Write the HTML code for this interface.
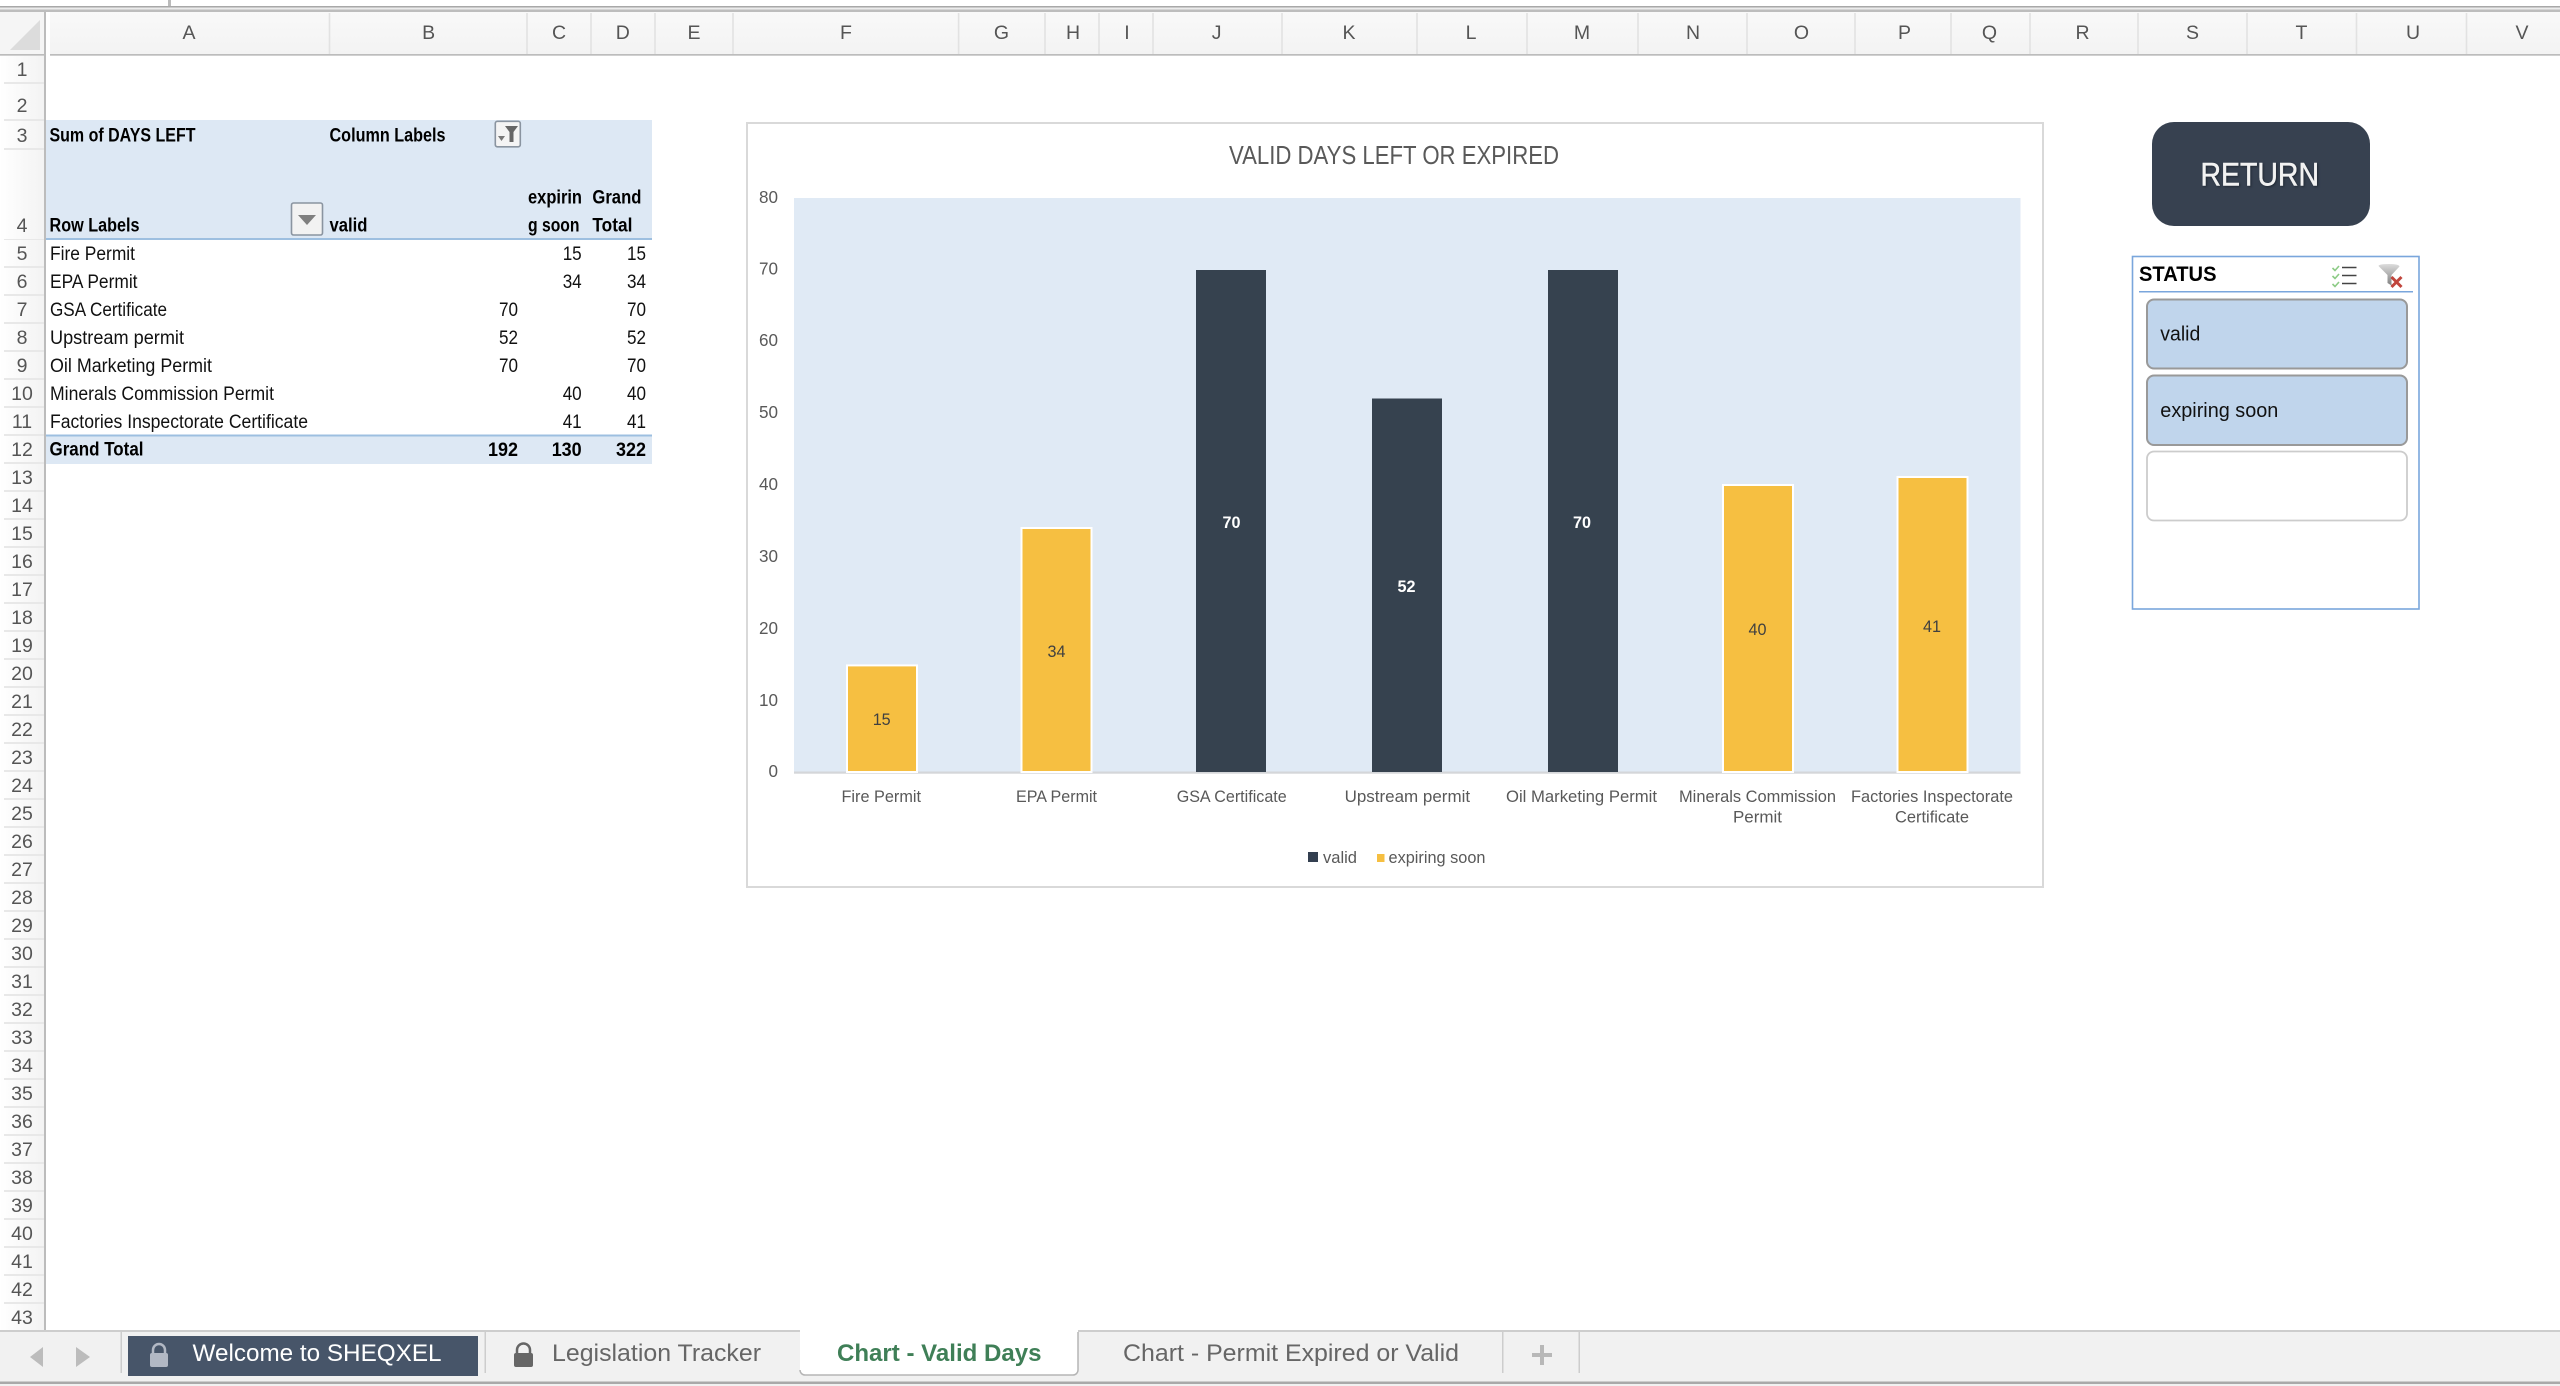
<!DOCTYPE html>
<html lang="en"><head><meta charset="utf-8"><title>Chart - Valid Days</title>
<style>
html,body{margin:0;padding:0;background:#fff;overflow:hidden}
svg{display:block}
text{font-family:"Liberation Sans",Arial,sans-serif}
.h{font-size:19.5px;fill:#555;text-anchor:middle}
.c{font-size:19.5px;fill:#555;text-anchor:middle}
.t{font-size:19px;fill:#111}
.b{font-size:19px;fill:#000;font-weight:bold}
.n{font-size:19px;fill:#111;text-anchor:end}
.nb{font-size:19px;fill:#000;font-weight:bold;text-anchor:end}
.y{font-size:17.5px;fill:#595959;text-anchor:end}
.x{font-size:16.5px;fill:#595959}
.dl{font-size:16.5px;fill:#404040;text-anchor:middle}
.dw{font-size:16.5px;fill:#fff;font-weight:bold;text-anchor:middle}
.tab{font-size:24px}
</style></head>
<body>
<svg width="2560" height="1386" viewBox="0 0 2560 1386" xmlns="http://www.w3.org/2000/svg">
<defs>
<linearGradient id="rh" x1="0" x2="1" y1="0" y2="0"><stop offset="0" stop-color="#fff"/><stop offset="1" stop-color="#f3f3f3"/></linearGradient>
<linearGradient id="ch" x1="0" x2="0" y1="0" y2="1"><stop offset="0" stop-color="#f9f9f9"/><stop offset="1" stop-color="#f3f3f3"/></linearGradient>
<linearGradient id="fg" x1="0" x2="0" y1="0" y2="1"><stop offset="0" stop-color="#dcdcdc"/><stop offset="1" stop-color="#808080"/></linearGradient>
<pattern id="rs" x="0" y="267" width="44" height="28" patternUnits="userSpaceOnUse"><rect x="4" y="-1" width="40" height="2" fill="#e8e8e8"/><rect x="4" y="27" width="40" height="2" fill="#e8e8e8"/></pattern>
</defs>
<rect width="2560" height="1386" fill="#fff"/>

<!-- top strip -->
<rect x="168" y="0" width="3" height="6" fill="#bbb"/>
<rect x="0" y="6" width="2560" height="1.5" fill="#a8a8a8"/>
<rect x="0" y="7.5" width="2560" height="2" fill="#ececec"/>
<rect x="0" y="9.5" width="2560" height="2.5" fill="#bdbdbd"/>

<!-- column header -->
<rect x="50" y="12" width="2510" height="42" fill="url(#ch)"/>
<rect x="50" y="54" width="2510" height="1.7" fill="#bcbcbc"/>
<rect x="0" y="12" width="44" height="42" fill="#f5f5f5"/>
<polygon points="10,50 40,20 40,50" fill="#dcdcdc"/>
<rect x="0" y="54" width="46" height="1.7" fill="#bcbcbc"/>
<rect x="44" y="12" width="2" height="1318" fill="#bcbcbc"/>
<path d="M329.5 13V54M527 13V54M591 13V54M655 13V54M733 13V54M958.6 13V54M1045 13V54M1099 13V54M1153 13V54M1282 13V54M1417 13V54M1527 13V54M1638 13V54M1747 13V54M1855 13V54M1951 13V54M2030 13V54M2138 13V54M2247 13V54M2356.5 13V54M2466.5 13V54" stroke="#e2e2e2" stroke-width="1.6" fill="none"/>
<text class="c" x="189" y="39">A</text><text class="c" x="428.6" y="39">B</text><text class="c" x="559" y="39">C</text><text class="c" x="622.8" y="39">D</text><text class="c" x="694" y="39">E</text><text class="c" x="846" y="39">F</text><text class="c" x="1001.500" y="39">G</text><text class="c" x="1073" y="39">H</text><text class="c" x="1127" y="39">I</text><text class="c" x="1216.6" y="39">J</text><text class="c" x="1349" y="39">K</text><text class="c" x="1471" y="39">L</text><text class="c" x="1582" y="39">M</text><text class="c" x="1693" y="39">N</text><text class="c" x="1801.500" y="39">O</text><text class="c" x="1904.500" y="39">P</text><text class="c" x="1989.500" y="39">Q</text><text class="c" x="2082.500" y="39">R</text><text class="c" x="2192.500" y="39">S</text><text class="c" x="2301.5" y="39">T</text><text class="c" x="2413" y="39">U</text><text class="c" x="2522" y="39">V</text>

<!-- row header -->
<rect x="0" y="56" width="44" height="1274" fill="url(#rh)"/>
<rect x="0" y="239" width="44" height="1091" fill="url(#rs)"/>
<path d="M4 83H44M4 120H44M4 149H44" stroke="#e8e8e8" stroke-width="2"/>
<text class="h" x="22" y="76">1</text><text class="h" x="22" y="112">2</text><text class="h" x="22" y="142">3</text><text class="h" x="22" y="232">4</text><text class="h" x="22" y="260">5</text><text class="h" x="22" y="288">6</text><text class="h" x="22" y="316">7</text><text class="h" x="22" y="344">8</text><text class="h" x="22" y="372">9</text><text class="h" x="22" y="400">10</text><text class="h" x="22" y="428">11</text><text class="h" x="22" y="456">12</text><text class="h" x="22" y="484">13</text><text class="h" x="22" y="512">14</text><text class="h" x="22" y="540">15</text><text class="h" x="22" y="568">16</text><text class="h" x="22" y="596">17</text><text class="h" x="22" y="624">18</text><text class="h" x="22" y="652">19</text><text class="h" x="22" y="680">20</text><text class="h" x="22" y="708">21</text><text class="h" x="22" y="736">22</text><text class="h" x="22" y="764">23</text><text class="h" x="22" y="792">24</text><text class="h" x="22" y="820">25</text><text class="h" x="22" y="848">26</text><text class="h" x="22" y="876">27</text><text class="h" x="22" y="904">28</text><text class="h" x="22" y="932">29</text><text class="h" x="22" y="960">30</text><text class="h" x="22" y="988">31</text><text class="h" x="22" y="1016">32</text><text class="h" x="22" y="1044">33</text><text class="h" x="22" y="1072">34</text><text class="h" x="22" y="1100">35</text><text class="h" x="22" y="1128">36</text><text class="h" x="22" y="1156">37</text><text class="h" x="22" y="1184">38</text><text class="h" x="22" y="1212">39</text><text class="h" x="22" y="1240">40</text><text class="h" x="22" y="1268">41</text><text class="h" x="22" y="1296">42</text><text class="h" x="22" y="1324">43</text>

<!-- pivot table -->
<rect x="46" y="120" width="606" height="119" fill="#dde8f4"/>
<rect x="46" y="238" width="606" height="2" fill="#9dbfe0"/>
<rect x="46" y="435" width="606" height="29" fill="#dde8f4"/>
<rect x="46" y="434.5" width="606" height="2" fill="#9dbfe0"/>
<text class="b" x="49.5" y="141.500" textLength="146" lengthAdjust="spacingAndGlyphs">Sum of DAYS LEFT</text>
<text class="b" x="329.5" y="141.500" textLength="116" lengthAdjust="spacingAndGlyphs">Column Labels</text>
<rect x="495.3" y="121.3" width="25" height="25.5" rx="2" fill="#f4f4f4" stroke="#8a94a0" stroke-width="1.6"/>
<path d="M505 126H518L513.5 132V142H509.5V132Z" fill="#666"/>
<path d="M498 136H505L501.5 141Z" fill="#777"/>
<text class="b" x="49.5" y="231.500" textLength="90" lengthAdjust="spacingAndGlyphs">Row Labels</text>
<rect x="291.5" y="203" width="31" height="32" rx="2" fill="#f2f2f2" stroke="#8a94a0" stroke-width="1.6"/>
<path d="M298 215H316L307 225Z" fill="#7f7f7f"/>
<text class="b" x="329.5" y="231.500" textLength="38" lengthAdjust="spacingAndGlyphs">valid</text>
<text class="b" x="528" y="203.500" textLength="54" lengthAdjust="spacingAndGlyphs">expirin</text>
<text class="b" x="528" y="231.500" textLength="51.5" lengthAdjust="spacingAndGlyphs">g soon</text>
<text class="b" x="592.4" y="203.500" textLength="49" lengthAdjust="spacingAndGlyphs">Grand</text>
<text class="b" x="592.4" y="231.500" textLength="40" lengthAdjust="spacingAndGlyphs">Total</text>

<text class="t" x="50" y="260" textLength="85" lengthAdjust="spacingAndGlyphs">Fire Permit</text>
<text class="t" x="50" y="288" textLength="87.5" lengthAdjust="spacingAndGlyphs">EPA Permit</text>
<text class="t" x="50" y="316" textLength="117" lengthAdjust="spacingAndGlyphs">GSA Certificate</text>
<text class="t" x="50" y="344" textLength="134" lengthAdjust="spacingAndGlyphs">Upstream permit</text>
<text class="t" x="50" y="372" textLength="162" lengthAdjust="spacingAndGlyphs">Oil Marketing Permit</text>
<text class="t" x="50" y="400" textLength="224" lengthAdjust="spacingAndGlyphs">Minerals Commission Permit</text>
<text class="t" x="50" y="428" textLength="258" lengthAdjust="spacingAndGlyphs">Factories Inspectorate Certificate</text>
<text class="b" x="49.5" y="455.500" textLength="94" lengthAdjust="spacingAndGlyphs">Grand Total</text>

<text class="n" x="581.7" y="260" textLength="19" lengthAdjust="spacingAndGlyphs">15</text><text class="n" x="646" y="260" textLength="19" lengthAdjust="spacingAndGlyphs">15</text>
<text class="n" x="581.7" y="288" textLength="19" lengthAdjust="spacingAndGlyphs">34</text><text class="n" x="646" y="288" textLength="19" lengthAdjust="spacingAndGlyphs">34</text>
<text class="n" x="518" y="316" textLength="19" lengthAdjust="spacingAndGlyphs">70</text><text class="n" x="646" y="316" textLength="19" lengthAdjust="spacingAndGlyphs">70</text>
<text class="n" x="518" y="344" textLength="19" lengthAdjust="spacingAndGlyphs">52</text><text class="n" x="646" y="344" textLength="19" lengthAdjust="spacingAndGlyphs">52</text>
<text class="n" x="518" y="372" textLength="19" lengthAdjust="spacingAndGlyphs">70</text><text class="n" x="646" y="372" textLength="19" lengthAdjust="spacingAndGlyphs">70</text>
<text class="n" x="581.7" y="400" textLength="19" lengthAdjust="spacingAndGlyphs">40</text><text class="n" x="646" y="400" textLength="19" lengthAdjust="spacingAndGlyphs">40</text>
<text class="n" x="581.7" y="428" textLength="19" lengthAdjust="spacingAndGlyphs">41</text><text class="n" x="646" y="428" textLength="19" lengthAdjust="spacingAndGlyphs">41</text>
<text class="nb" x="518" y="456" textLength="30" lengthAdjust="spacingAndGlyphs">192</text><text class="nb" x="581.7" y="456" textLength="30" lengthAdjust="spacingAndGlyphs">130</text><text class="nb" x="646" y="456" textLength="30" lengthAdjust="spacingAndGlyphs">322</text>

<!-- chart -->
<rect x="747" y="123" width="1296" height="764" fill="#fff" stroke="#d9d9d9" stroke-width="2"/>
<text x="1229" y="164" font-size="25.500" fill="#595959" textLength="330" lengthAdjust="spacingAndGlyphs">VALID DAYS LEFT OR EXPIRED</text>
<rect x="794" y="198" width="1226.500" height="574" fill="#e0eaf5"/>
<rect x="794" y="771.5" width="1226.500" height="2.2" fill="#d4d6d9"/>
<text class="y" x="778" y="203" textLength="19" lengthAdjust="spacingAndGlyphs">80</text>
<text class="y" x="778" y="274.500" textLength="19" lengthAdjust="spacingAndGlyphs">70</text>
<text class="y" x="778" y="346" textLength="19" lengthAdjust="spacingAndGlyphs">60</text>
<text class="y" x="778" y="418" textLength="19" lengthAdjust="spacingAndGlyphs">50</text>
<text class="y" x="778" y="490" textLength="19" lengthAdjust="spacingAndGlyphs">40</text>
<text class="y" x="778" y="562" textLength="19" lengthAdjust="spacingAndGlyphs">30</text>
<text class="y" x="778" y="634" textLength="19" lengthAdjust="spacingAndGlyphs">20</text>
<text class="y" x="778" y="706" textLength="19" lengthAdjust="spacingAndGlyphs">10</text>
<text class="y" x="778" y="777" textLength="9.5" lengthAdjust="spacingAndGlyphs">0</text>

<rect x="847" y="665.4" width="70" height="106.6" fill="#f6bf41" stroke="#fff" stroke-width="2"/>
<rect x="1021.500" y="528" width="70" height="244" fill="#f6bf41" stroke="#fff" stroke-width="2"/>
<rect x="1196" y="270" width="70" height="502" fill="#36424f"/>
<rect x="1372" y="398.5" width="70" height="373.5" fill="#36424f"/>
<rect x="1548" y="270" width="70" height="502" fill="#36424f"/>
<rect x="1723" y="485" width="70" height="287" fill="#f6bf41" stroke="#fff" stroke-width="2"/>
<rect x="1897.500" y="477" width="70" height="295" fill="#f6bf41" stroke="#fff" stroke-width="2"/>

<text class="dl" x="881.7" y="725" textLength="18" lengthAdjust="spacingAndGlyphs">15</text>
<text class="dl" x="1056.5" y="657" textLength="18" lengthAdjust="spacingAndGlyphs">34</text>
<text class="dw" x="1231.500" y="528" textLength="18" lengthAdjust="spacingAndGlyphs">70</text>
<text class="dw" x="1406.500" y="592" textLength="18" lengthAdjust="spacingAndGlyphs">52</text>
<text class="dw" x="1582" y="528" textLength="18" lengthAdjust="spacingAndGlyphs">70</text>
<text class="dl" x="1757.500" y="635" textLength="18" lengthAdjust="spacingAndGlyphs">40</text>
<text class="dl" x="1932" y="632" textLength="18" lengthAdjust="spacingAndGlyphs">41</text>

<text class="x" x="841.5" y="802" textLength="79.5" lengthAdjust="spacingAndGlyphs">Fire Permit</text>
<text class="x" x="1016" y="802" textLength="81" lengthAdjust="spacingAndGlyphs">EPA Permit</text>
<text class="x" x="1176.7" y="802" textLength="110" lengthAdjust="spacingAndGlyphs">GSA Certificate</text>
<text class="x" x="1344.6" y="802" textLength="125.5" lengthAdjust="spacingAndGlyphs">Upstream permit</text>
<text class="x" x="1506" y="802" textLength="151" lengthAdjust="spacingAndGlyphs">Oil Marketing Permit</text>
<text class="x" x="1679" y="802" textLength="157" lengthAdjust="spacingAndGlyphs">Minerals Commission</text>
<text class="x" x="1733" y="822.7" textLength="49" lengthAdjust="spacingAndGlyphs">Permit</text>
<text class="x" x="1851" y="802" textLength="162" lengthAdjust="spacingAndGlyphs">Factories Inspectorate</text>
<text class="x" x="1895" y="822.7" textLength="74" lengthAdjust="spacingAndGlyphs">Certificate</text>

<rect x="1308" y="852" width="10" height="10" fill="#333f50"/>
<text class="x" x="1323" y="863" textLength="34" lengthAdjust="spacingAndGlyphs">valid</text>
<rect x="1377" y="854" width="7.5" height="8" fill="#f6bf41"/>
<text class="x" x="1388.5" y="863" textLength="97" lengthAdjust="spacingAndGlyphs">expiring soon</text>

<!-- return button -->
<rect x="2152" y="122" width="218" height="104" rx="22" fill="#374150"/>
<text x="2200.500" y="185.5" font-size="32.500" fill="#f2f2f2" stroke="#f2f2f2" stroke-width=".5" textLength="118.500" lengthAdjust="spacingAndGlyphs" style="filter:drop-shadow(1px 1px 1px #1f2732)">RETURN</text>

<!-- slicer -->
<rect x="2132.5" y="256.5" width="286.5" height="352.5" fill="#fff" stroke="#7aa6dc" stroke-width="1.6"/>
<text x="2139" y="281" font-size="21" font-weight="bold" fill="#000" textLength="77.5" lengthAdjust="spacingAndGlyphs">STATUS</text>
<rect x="2139" y="291" width="274" height="1.5" fill="#7aa6dc"/>
<path d="M2332.5 268l2.5 2.5 4-4.5M2332.5 276l2.5 2.5 4-4.5M2332.5 284l2.5 2.5 4-4.5" fill="none" stroke="#8ccb85" stroke-width="1.6"/>
<path d="M2342 267.5H2356.5M2342 275.5H2356.5M2342 283.5H2356.5" stroke="#444" stroke-width="1.5"/>
<path d="M2378.500 266Q2379 264 2389 264Q2399 264 2399.500 266.500L2391.500 275V285.500L2387.500 283V275Z" fill="url(#fg)"/>
<path d="M2391.500 277L2401.500 287M2401.500 277L2391.500 287" stroke="#c0453c" stroke-width="3"/>

<rect x="2147" y="299.500" width="260" height="69" rx="7" fill="#c0d5ec" stroke="#999" stroke-width="2"/>
<text x="2160.300" y="340.700" font-size="20" fill="#111" textLength="40" lengthAdjust="spacingAndGlyphs">valid</text>
<rect x="2147" y="375.500" width="260" height="69.500" rx="7" fill="#c0d5ec" stroke="#999" stroke-width="2"/>
<text x="2160.300" y="417" font-size="20" fill="#111" textLength="118" lengthAdjust="spacingAndGlyphs">expiring soon</text>
<rect x="2147" y="451.500" width="260" height="69" rx="7" fill="#fff" stroke="#ccc" stroke-width="1.800"/>

<!-- tab bar -->
<rect x="0" y="1330" width="2560" height="56" fill="#f1f1f1"/>
<rect x="0" y="1330" width="2560" height="2" fill="#cdcdcd"/>
<rect x="0" y="1381.500" width="2560" height="2.500" fill="#a9a9a9"/>
<path d="M43 1347L30 1357L43 1367Z M76 1347L90 1357L76 1367Z" fill="#bcbcbc"/>
<rect x="120.500" y="1332" width="1.500" height="41" fill="#cdcdcd"/>
<rect x="128" y="1336" width="350" height="40" fill="#475569"/>
<path d="M153 1354V1350a6 6 0 0 1 12 0V1354" fill="none" stroke="#b2b8c4" stroke-width="2.500"/>
<rect x="150" y="1353" width="18" height="14" rx="2" fill="#b2b8c4"/>
<text class="tab" x="192.500" y="1361" fill="#fff" textLength="249" lengthAdjust="spacingAndGlyphs">Welcome to SHEQXEL</text>
<rect x="484.500" y="1332" width="1.500" height="41" fill="#cdcdcd"/>
<path d="M517 1354V1350a6.500 6.500 0 0 1 13 0V1354" fill="none" stroke="#666" stroke-width="2.500"/>
<rect x="514" y="1353" width="19" height="14" rx="2" fill="#666"/>
<text class="tab" x="552" y="1361" fill="#666" textLength="209" lengthAdjust="spacingAndGlyphs">Legislation Tracker</text>
<path d="M800 1330H1078V1370a5 5 0 0 1-5 5H805a5 5 0 0 1-5-5Z" fill="#fff"/>
<path d="M800 1370a5 5 0 0 0 5 5H1073a5 5 0 0 0 5-5V1332" fill="none" stroke="#b5b5b5" stroke-width="1.500"/>
<text class="tab" x="837" y="1361" fill="#3f7f57" font-weight="bold" textLength="204.500" lengthAdjust="spacingAndGlyphs">Chart - Valid Days</text>
<text class="tab" x="1123" y="1361" fill="#666" textLength="336" lengthAdjust="spacingAndGlyphs">Chart - Permit Expired or Valid</text>
<rect x="1502" y="1332" width="1.500" height="41" fill="#cdcdcd"/>
<path d="M1532 1355H1552M1542 1345V1365" stroke="#b8b8b8" stroke-width="4"/>
<rect x="1578.500" y="1332" width="1.500" height="41" fill="#cdcdcd"/>
</svg>
</body></html>
